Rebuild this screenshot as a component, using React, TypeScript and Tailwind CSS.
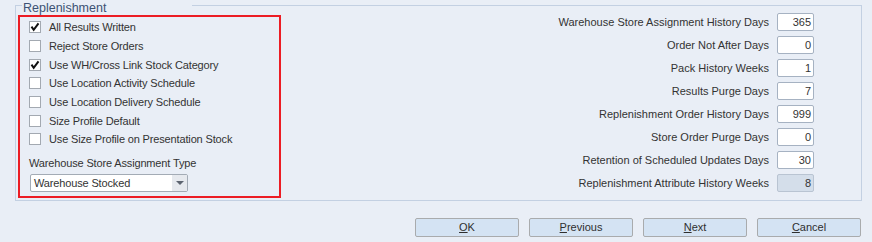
import React from "react";

const checks: [string, boolean][] = [
  ["All Results Written", true],
  ["Reject Store Orders", false],
  ["Use WH/Cross Link Stock Category", true],
  ["Use Location Activity Schedule", false],
  ["Use Location Delivery Schedule", false],
  ["Size Profile Default", false],
  ["Use Size Profile on Presentation Stock", false],
];

const fields: [string, string, boolean][] = [
  ["Warehouse Store Assignment History Days", "365", false],
  ["Order Not After Days", "0", false],
  ["Pack History Weeks", "1", false],
  ["Results Purge Days", "7", false],
  ["Replenishment Order History Days", "999", false],
  ["Store Order Purge Days", "0", false],
  ["Retention of Scheduled Updates Days", "30", false],
  ["Replenishment Attribute History Weeks", "8", true],
];

function CheckBox({ checked }: { checked: boolean }) {
  return (
    <span className="w-[12px] h-[12px] border border-[#a3a9b1] bg-white flex items-center justify-center shrink-0">
      {checked && (
        <svg width="10" height="10" viewBox="0 0 10 10">
          <path d="M1.5 4.6 L3.7 7.8 L8.5 1.4" fill="none" stroke="#111" strokeWidth="2" />
        </svg>
      )}
    </span>
  );
}

function Btn({ label }: { label: string }) {
  return (
    <button className="w-[104px] h-[19px] bg-[#d4e3f3] border border-[#a9abad] rounded-[2px] text-[11px] leading-[17px] text-[#2f2f2f] text-center">
      <span className="underline underline-offset-[1px]">{label[0]}</span>
      {label.slice(1)}
    </button>
  );
}

export default function App() {
  return (
    <div
      className="w-[872px] h-[242px] bg-[#e9eef6] overflow-hidden text-[#333]"
      style={{ fontFamily: '"Liberation Sans", Arial, sans-serif' }}
    >
      <div className="ml-[15px] mt-[5px] w-[847px] h-[196px] border-x border-b border-[#c3d0e2] flex flex-col">
        <div className="flex items-start h-px">
          <div className="w-[6px] border-t border-[#c3d0e2]" />
          <div className="w-[170px] -mt-[3px] h-[12px] leading-[12px] pl-[1px] text-[12.5px] text-[#3d5274]">
            Replenishment
          </div>
          <div className="flex-1 border-t border-[#c3d0e2]" />
        </div>
        <div className="flex flex-1 pl-[2px]">
          <div className="mt-[9px] w-[263px] h-[183px] border-2 border-[#ec1c24] pl-[9px] pt-[1px] text-[11px] tracking-[-0.15px]">
            {checks.map(([label, c]) => (
              <div key={label} className="h-[18.67px] flex items-center gap-[8px]">
                <CheckBox checked={c} />
                <span className="leading-[14px]">{label}</span>
              </div>
            ))}
            <div className="mt-[7.5px] leading-[14px]">Warehouse Store Assignment Type</div>
            <div className="mt-[4px] ml-[1px] w-[158px] h-[18px] border border-[#a3abb5] rounded-[2px] bg-white flex items-stretch">
              <span className="flex-1 pl-[3px] leading-[16px]">Warehouse Stocked</span>
              <span className="w-[15px] bg-[#e6e9ee] flex items-center justify-center">
                <svg width="8" height="4" viewBox="0 0 8 4">
                  <path d="M0 0 L8 0 L4 4 Z" fill="#5d6470" />
                </svg>
              </span>
            </div>
          </div>
          <div className="flex-1 flex flex-col items-end gap-[5px] pt-[7px] pr-[47px] text-[11px]">
            {fields.map(([label, v, dis]) => (
              <div key={label} className="h-[18px] flex items-center gap-[8px]">
                <span className="leading-[14px]">{label}</span>
                <span
                  className={
                    "w-[37px] h-[18px] border rounded-[2px] text-right pr-[2px] leading-[16px] " +
                    (dis ? "bg-[#d4deea] border-[#b9c4d2]" : "bg-white border-[#a6b2c2]")
                  }
                >
                  {v}
                </span>
              </div>
            ))}
          </div>
        </div>
      </div>
      <div className="mt-[17px] flex justify-end gap-[10px] pr-[11px]">
        <Btn label="OK" />
        <Btn label="Previous" />
        <Btn label="Next" />
        <Btn label="Cancel" />
      </div>
    </div>
  );
}
